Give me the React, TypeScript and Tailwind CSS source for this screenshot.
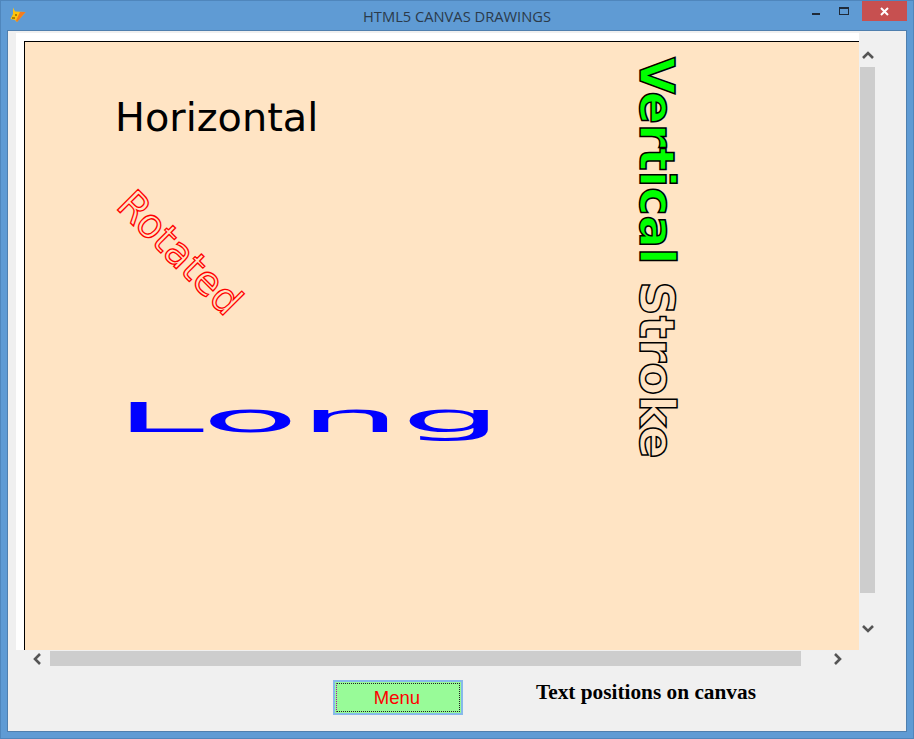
import React from 'react';

const dejavu = "font-['DejaVu_Sans',sans-serif]";

const Chevron = ({ d }: { d: string }) => (
    <svg width="12" height="12" viewBox="0 0 12 12" className="shrink-0">
        <path d={d} fill="none" stroke="#555555" strokeWidth="2.6" />
    </svg>
);

const FoxIcon = () => (
    <svg width="16" height="16" viewBox="0 0 16 16" className="shrink-0">
        <path d="M3 0.5 L5 4.5 L15.5 5 L7 15 L5 13 L0.5 12 L3 7 Z" fill="#ffc20e" />
        <path d="M15.5 5 L10 5 L6 13.5 L7 15 Z" fill="#f47b20" />
        <path d="M2 11 h3 M5 8 h2" stroke="#5a4000" strokeWidth="1" />
    </svg>
);

const TitleBar = () => (
    <div className="h-[31px] shrink-0 flex items-start">
        <div className="pl-[10px] pt-[7px]">
            <FoxIcon />
        </div>
        <div className="flex-1 text-center pt-[7px] pl-[76px] text-[14.7px] leading-[18px] text-[#2b3a4a] font-['Open_Sans',sans-serif]">
            HTML5 CANVAS DRAWINGS
        </div>
        <div className="flex items-start">
            <div className="w-[8px] h-[2px] bg-[#1f2a38] mt-[13px] mr-[19px]" />
            <div className="w-[10px] h-[8px] border border-[#1f2a38] border-t-2 mt-[7px] mr-[13px]" />
            <div className="w-[45px] h-[20px] bg-[#c75050] mt-[1px] mr-[7px] flex items-center justify-center">
                <svg width="9" height="9" viewBox="0 0 9 9">
                    <path d="M1 1 L8 8 M8 1 L1 8" stroke="#ffffff" strokeWidth="2" />
                </svg>
            </div>
        </div>
    </div>
);

const CanvasArea = () => (
    <div className="w-[843px] h-[617px] bg-white pl-[8px] pt-[8px] overflow-hidden shrink-0">
        <div className="relative w-[900px] h-[700px] bg-[#ffe4c4] border-l border-t border-black">
            <div className={`absolute left-[90px] top-[48px] text-[39.8px] leading-[54px] text-black whitespace-nowrap ${dejavu}`}>
                Horizontal
            </div>
            <div
                className={`absolute left-[116px] top-[139px] text-[40px] leading-[46px] whitespace-nowrap origin-top-left rotate-45 text-transparent [-webkit-text-stroke:1.3px_#ff0000] ${dejavu}`}
            >
                Rotated
            </div>
            <div
                className={`absolute left-[90px] top-[349px] text-[40px] leading-[54px] text-[#0000ff] whitespace-nowrap origin-top-left scale-x-[4] ${dejavu}`}
            >
                Long
            </div>
            <div
                className={`absolute left-[659px] top-[15px] text-[48px] leading-[54px] font-bold whitespace-pre origin-top-left rotate-90 ${dejavu}`}
            >
                <span className="text-[#00ff00] [-webkit-text-stroke:1.5px_#000000]">Vertical </span>
                <span className="text-transparent [-webkit-text-stroke:1.5px_#000000]">Stroke</span>
            </div>
        </div>
    </div>
);

const VerticalBar = () => (
    <div className="w-[15px] ml-[1px] flex flex-col items-center">
        <div className="h-[34px] flex items-center justify-center pt-[10px]">
            <Chevron d="M1 9 L6 4 L11 9" />
        </div>
        <div className="w-[15px] h-[526px] bg-[#cdcdcd]" />
        <div className="h-[42px] flex items-end justify-center">
            <Chevron d="M1 3 L6 8 L11 3" />
        </div>
    </div>
);

const HorizontalBar = () => (
    <div className="h-[15px] mt-[1px] flex items-center">
        <div className="w-[42px] flex justify-end pr-[7px]">
            <Chevron d="M9 1 L4 6 L9 11" />
        </div>
        <div className="w-[751px] h-[15px] bg-[#cdcdcd]" />
        <div className="pl-[31px]">
            <Chevron d="M3 1 L8 6 L3 11" />
        </div>
    </div>
);

const Footer = () => (
    <div className="flex items-start pl-[325px] pt-[14px]">
        <button className="w-[130px] h-[35px] bg-[#98fb98] border-2 border-[#87b9ea] p-[1px] shrink-0">
            <div className="h-full border border-dotted border-[#222222] border-l-[#b000b0] flex items-center justify-center pr-[2px] text-[18.5px] text-[#ff0000] font-['Liberation_Sans',sans-serif]">
                Menu
            </div>
        </button>
        <div className="ml-[73px] pt-[1px] text-[21.3px] leading-[22px] font-bold text-black whitespace-nowrap font-['Liberation_Serif',serif]">
            Text positions on canvas
        </div>
    </div>
);

export default function App() {
    return (
        <div className="w-[914px] h-[739px] bg-[#5f9bd4] shadow-[inset_0_0_0_1px_#4f86bc] flex flex-col overflow-hidden">
            <TitleBar />
            <div className="mx-[8px] mb-[8px] flex-1 bg-[#f0f0f0] pt-[2px] outline outline-1 outline-[#4f7fae]">
                <div className="flex pl-[8px]">
                    <CanvasArea />
                    <VerticalBar />
                </div>
                <HorizontalBar />
                <Footer />
            </div>
        </div>
    );
}
